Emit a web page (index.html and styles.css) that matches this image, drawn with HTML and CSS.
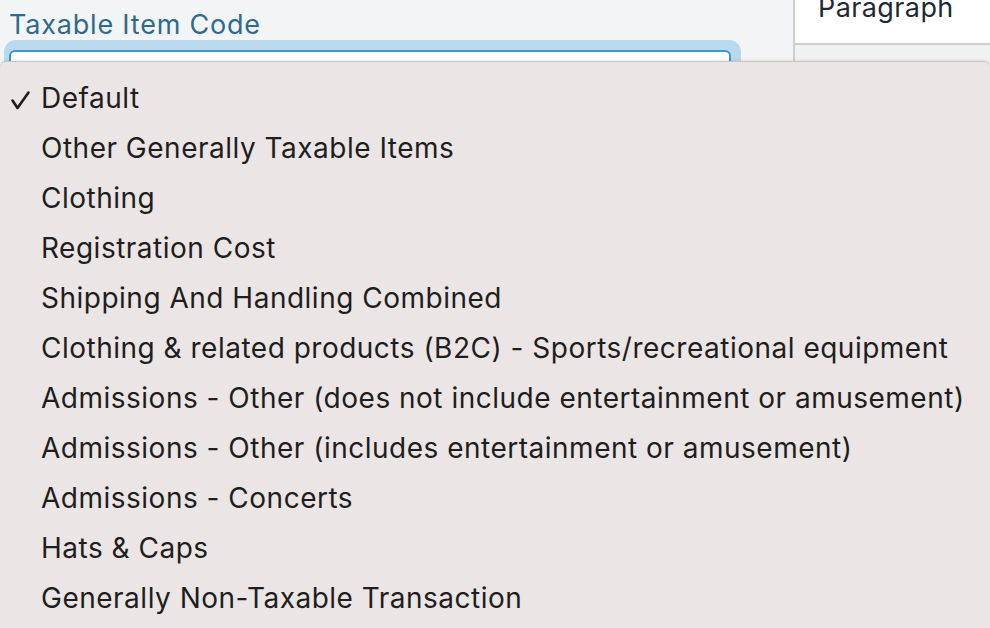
FILE: index.html
```html
<!DOCTYPE html>
<html>
<head>
<meta charset="utf-8">
<link rel="stylesheet" href="styles.css">
</head>
<body>
<div class="page">
  <div class="main">
    <label class="field-label">Taxable Item Code</label>
    <div class="select-ring"><div class="select-box"></div></div>
  </div>
  <aside class="side">
    <div class="side-head">Paragraph</div>
    <div class="side-body"></div>
  </aside>
</div>
<ul class="menu">
  <li class="selected"><svg class="check" width="22" height="22" viewBox="0 0 22 22"><path d="M2.5 10.5 L7.5 18 L18.5 2.5" fill="none" stroke="#1e1e1e" stroke-width="2.6" stroke-linecap="round" stroke-linejoin="round"/></svg>Default</li>
  <li>Other Generally Taxable Items</li>
  <li>Clothing</li>
  <li>Registration Cost</li>
  <li>Shipping And Handling Combined</li>
  <li>Clothing &amp; related products (B2C) - Sports/recreational equipment</li>
  <li>Admissions - Other (does not include entertainment or amusement)</li>
  <li>Admissions - Other (includes entertainment or amusement)</li>
  <li>Admissions - Concerts</li>
  <li>Hats &amp; Caps</li>
  <li>Generally Non-Taxable Transaction</li>
</ul>
</body>
</html>
```
FILE: styles.css
```css
* { box-sizing: border-box; }
html, body { margin: 0; padding: 0; }
body {
  width: 990px;
  height: 628px;
  overflow: hidden;
  background: #f3f4f6;
  font-family: Inter, "Noto Sans", sans-serif;
  position: relative;
}
.page {
  display: flex;
  height: 628px;
}
.main {
  flex: 1;
  padding: 9px 0 0 9px;
}
.field-label {
  display: block;
  font-size: 27px;
  line-height: 31px;
  color: #2d6a8e;
  letter-spacing: 0.8px;
}
.select-ring {
  margin: 0 0 0 -5px;
  width: 737px;
  height: 40px;
  border-radius: 12px;
  background: #b9d9ee;
  padding: 10px 0 0 5px;
}
.select-box {
  width: 722px;
  height: 40px;
  border: 2px solid #3d95d3;
  border-radius: 6px;
  background: #ffffff;
}
.side {
  width: 197px;
  border-left: 2px solid #cfcfcf;
  display: flex;
  flex-direction: column;
}
.side-head {
  height: 45px;
  background: #ffffff;
  border-bottom: 2px solid #cdcdcd;
  padding: 0 0 0 23px;
  font-size: 27px;
  line-height: 16px;
  color: #1f2937;
  overflow: hidden;
  letter-spacing: 0.4px;
}
.side-body {
  flex: 1;
  background: linear-gradient(#f1f1f1, #f7f7f7);
}
.menu {
  position: absolute;
  left: 0;
  top: 61px;
  width: 990px;
  height: 580px;
  margin: 0;
  padding: 11px 0 0 0;
  list-style: none;
  background: #ebe5e5;
  border-top: 1px solid #c9c5c5;
  border-radius: 6px 6px 0 0;
  box-shadow: 0 -1px 3px rgba(0,0,0,0.08);
}
.menu li {
  height: 50px;
  line-height: 50px;
  padding-left: 41px;
  font-size: 28px;
  letter-spacing: 0.5px;
  color: #1e1e1e;
  position: relative;
  white-space: nowrap;
}
.check {
  position: absolute;
  left: 10px;
  top: 17px;
}
```
